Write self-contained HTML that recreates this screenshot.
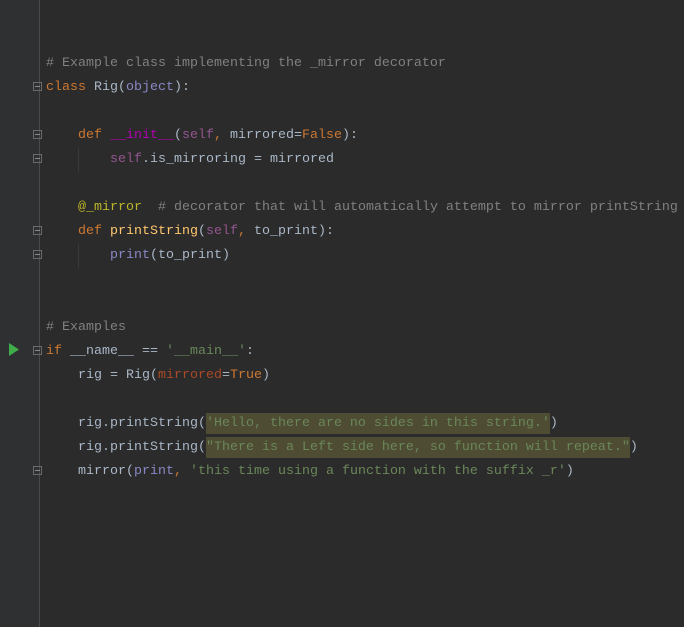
<html><head><style>
body{margin:0;width:684px;height:627px;background:#2b2b2b;overflow:hidden;position:relative;font-family:"Liberation Mono",monospace;font-size:13.33px}
.g{position:absolute;left:0;top:0;width:39px;height:627px;background:#2f3031;border-right:1px solid #4a4a4a}
.l{position:absolute;left:46px;height:24px;line-height:24px;white-space:pre;color:#a9b7c6}
.k{color:#cc7832}.c{color:#808080}.s{color:#94558d}.st{color:#6a8759}.f{color:#ffc66d}.m{color:#b200b2}.d{color:#bbb529}.b{color:#8888c6}.p{color:#aa4926}
.h{background:#4f4c34;padding:3px 0}
.fd{position:absolute;left:33px;width:9px;height:9px;border:1px solid #6a6a6a;box-sizing:border-box}
.fd:after{content:"";position:absolute;left:1px;top:3px;width:5px;height:1px;background:#8a8a8a}
.ig{position:absolute;width:1px;background:#3b3b3b}
</style></head><body>
<div class="g"></div>
<div class="ig" style="left:78px;top:148px;height:24px"></div>
<div class="ig" style="left:78px;top:244px;height:24px"></div>
<div class="fd" style="top:82px"></div>
<div class="fd" style="top:130px"></div>
<div class="fd" style="top:154px"></div>
<div class="fd" style="top:226px"></div>
<div class="fd" style="top:250px"></div>
<div class="fd" style="top:346px"></div>
<div class="fd" style="top:466px"></div>
<svg style="position:absolute;left:9px;top:343px" width="10" height="13"><path d="M0 0L10 6.5L0 13Z" fill="#3fae4a"/></svg>
<div class="l c" style="top:52px"># Example class implementing the _mirror decorator</div>
<div class="l" style="top:76px"><span class="k">class</span> Rig(<span class="b">object</span>):</div>
<div class="l" style="top:124px">    <span class="k">def</span> <span class="m">__init__</span>(<span class="s">self</span><span class="k">,</span> mirrored=<span class="k">False</span>):</div>
<div class="l" style="top:148px">        <span class="s">self</span>.is_mirroring = mirrored</div>
<div class="l" style="top:196px">    <span class="d">@_mirror</span>  <span class="c"># decorator that will automatically attempt to mirror printString</span></div>
<div class="l" style="top:220px">    <span class="k">def</span> <span class="f">printString</span>(<span class="s">self</span><span class="k">,</span> to_print):</div>
<div class="l" style="top:244px">        <span class="b">print</span>(to_print)</div>
<div class="l c" style="top:316px"># Examples</div>
<div class="l" style="top:340px"><span class="k">if</span> __name__ == <span class="st">'__main__'</span>:</div>
<div class="l" style="top:364px">    rig = Rig(<span class="p">mirrored</span>=<span class="k">True</span>)</div>
<div class="l" style="top:412px">    rig.printString(<span class="st h">'Hello, there are no sides in this string.'</span>)</div>
<div class="l" style="top:436px">    rig.printString(<span class="st h">"There is a Left side here, so function will repeat."</span>)</div>
<div class="l" style="top:460px">    mirror(<span class="b">print</span><span class="k">,</span> <span class="st">'this time using a function with the suffix _r'</span>)</div>
</body></html>
